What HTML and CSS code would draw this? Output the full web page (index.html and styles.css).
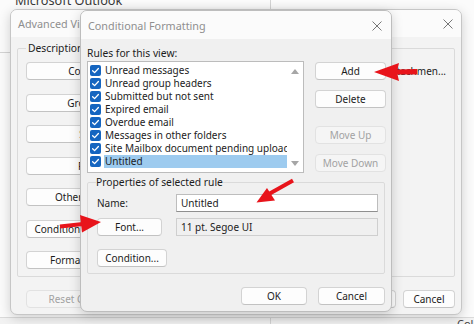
FILE: index.html
```html
<!DOCTYPE html>
<html>
<head>
<meta charset="utf-8">
<link rel="stylesheet" href="styles.css">
</head>
<body>
<div class="app-title">Microsoft Outlook</div>
<div class="deco vtop"></div>
<div class="deco hleft"></div>
<div class="statusbar"><span class="deco vbot"></span><span class="st-text">Col</span></div>

<section class="win adv">
  <header class="tbar">
    <span class="ttl">Advanced View Settings: Compact</span>
    <svg class="xbtn" width="10" height="10" viewBox="0 0 10 10"><path d="M0.5 0.5L9.5 9.5M9.5 0.5L0.5 9.5"/></svg>
  </header>
  <div class="adv-body">
    <fieldset class="grp desc">
      <legend>Description</legend>
      <div class="drows">
        <div class="drow"><button class="btn">Columns...</button><span class="dtext full">Importance, Reminder, Icon, Flag Status, Attachmen...</span></div>
        <div class="drow"><button class="btn">Group By...</button><span class="dtext">None</span></div>
        <div class="drow"><button class="btn">Sort...</button><span class="dtext">Received</span></div>
        <div class="drow"><button class="btn">Filter...</button><span class="dtext">Off</span></div>
        <div class="drow"><button class="btn">Other Settings...</button><span class="dtext">Fonts</span></div>
        <div class="drow"><button class="btn">Conditional Formatting...</button><span class="dtext">User</span></div>
        <div class="drow"><button class="btn">Format Columns...</button><span class="dtext">Specify</span></div>
      </div>
    </fieldset>
    <div class="adv-foot">
      <button class="btn reset" disabled>Reset Current View</button>
      <span class="sp"></span>
      <button class="btn sm">OK</button>
      <button class="btn sm">Cancel</button>
    </div>
  </div>
</section>

<section class="win cf">
  <header class="tbar">
    <span class="ttl">Conditional Formatting</span>
    <svg class="xbtn" width="10" height="10" viewBox="0 0 10 10"><path d="M0.5 0.5L9.5 9.5M9.5 0.5L0.5 9.5"/></svg>
  </header>
  <div class="cf-body">
    <div class="cf-top">
      <div class="cf-left">
        <div class="lbl">Rules for this view:</div>
        <div class="listbox">
          <div class="items">
            <div class="item"><svg class="cb" viewBox="0 0 11 11"><rect width="11" height="11" rx="2"/><path d="M2.6 5.7L4.6 7.6L8.4 3.5"/></svg><span class="it">Unread messages</span></div>
            <div class="item"><svg class="cb" viewBox="0 0 11 11"><rect width="11" height="11" rx="2"/><path d="M2.6 5.7L4.6 7.6L8.4 3.5"/></svg><span class="it">Unread group headers</span></div>
            <div class="item"><svg class="cb" viewBox="0 0 11 11"><rect width="11" height="11" rx="2"/><path d="M2.6 5.7L4.6 7.6L8.4 3.5"/></svg><span class="it">Submitted but not sent</span></div>
            <div class="item"><svg class="cb" viewBox="0 0 11 11"><rect width="11" height="11" rx="2"/><path d="M2.6 5.7L4.6 7.6L8.4 3.5"/></svg><span class="it">Expired email</span></div>
            <div class="item"><svg class="cb" viewBox="0 0 11 11"><rect width="11" height="11" rx="2"/><path d="M2.6 5.7L4.6 7.6L8.4 3.5"/></svg><span class="it">Overdue email</span></div>
            <div class="item"><svg class="cb" viewBox="0 0 11 11"><rect width="11" height="11" rx="2"/><path d="M2.6 5.7L4.6 7.6L8.4 3.5"/></svg><span class="it">Messages in other folders</span></div>
            <div class="item"><svg class="cb" viewBox="0 0 11 11"><rect width="11" height="11" rx="2"/><path d="M2.6 5.7L4.6 7.6L8.4 3.5"/></svg><span class="it">Site Mailbox document pending upload</span></div>
            <div class="item"><svg class="cb" viewBox="0 0 11 11"><rect width="11" height="11" rx="2"/><path d="M2.6 5.7L4.6 7.6L8.4 3.5"/></svg><span class="it sel">Untitled</span></div>
          </div>
          <div class="sbar">
            <svg width="8" height="5" viewBox="0 0 8 5"><path d="M0 5L4 0L8 5Z"/></svg>
            <svg width="8" height="5" viewBox="0 0 8 5"><path d="M0 0L8 0L4 5Z"/></svg>
          </div>
        </div>
      </div>
      <div class="cf-right">
        <button class="btn">Add</button>
        <button class="btn mt10">Delete</button>
        <button class="btn mt18" disabled>Move Up</button>
        <button class="btn mt10" disabled>Move Down</button>
      </div>
    </div>
    <fieldset class="grp props">
      <legend>Properties of selected rule</legend>
      <div class="pgrid">
        <span class="plbl">Name:</span>
        <div class="field inp">Untitled</div>
        <button class="btn font">Font...</button>
        <div class="field ro">11 pt. Segoe UI</div>
        <button class="btn cond">Condition...</button>
      </div>
    </fieldset>
    <div class="cf-foot">
      <button class="btn ok">OK</button>
      <button class="btn cancel">Cancel</button>
    </div>
  </div>
</section>

<svg class="arrows" width="474" height="324" viewBox="0 0 474 324">
  <path d="M374 72L399 63L397.5 69.5L417 69L417 74.5L397.5 74.5L399 81Z"/>
  <line x1="293" y1="180.5" x2="268" y2="194.5"/>
  <path d="M256.5 202.5L267 188L275 200.5Z"/>
  <line x1="60" y1="226.5" x2="83" y2="224"/>
  <path d="M101 222L80 215L82 232.5Z"/>
</svg>
</body>
</html>
```
FILE: styles.css
```css
* { box-sizing: border-box; }
html, body { margin: 0; padding: 0; }
body {
  width: 474px;
  height: 324px;
  overflow: hidden;
  position: relative;
  background: #fbfbfb;
  font-family: "Noto Sans", "Open Sans", "Liberation Sans", sans-serif;
  font-size: 10px;
  color: #1c1c1c;
}

.app-title {
  font-size: 12.7px;
  color: #3a3a3a;
  margin: -8px 0 0 15px;
  line-height: 16px;
  white-space: nowrap;
}

.deco { position: absolute; background: #d4d4d4; }
.vtop { left: 270px; top: 0; width: 1px; height: 10px; }
.hleft { left: 0; top: 52px; width: 10px; height: 1px; }

.statusbar {
  position: absolute;
  left: 0; top: 317px;
  width: 474px; height: 7px;
  background: #f2f2f2;
  border-top: 1px solid #dadada;
}
.vbot { left: 270px; top: 0; width: 1px; height: 7px; }
.st-text {
  position: absolute;
  left: 457px; top: 0;
  font-size: 11px;
  line-height: 12px;
  color: #444;
}

.win {
  position: absolute;
  border: 1px solid #c6c6c6;
  border-radius: 7px;
  background: #f3f3f3;
  box-shadow: 0 3px 12px rgba(0,0,0,0.18);
  overflow: hidden;
}
.tbar {
  height: 27px;
  display: flex;
  align-items: center;
  justify-content: space-between;
  padding: 0 9px 0 7px;
  background: #fbfbfb;
}
.ttl {
  font-size: 10.8px;
  color: #8f8f8f;
  white-space: nowrap;
}
.xbtn path { stroke: #777; stroke-width: 1; fill: none; }

.btn {
  font: inherit;
  color: #1c1c1c;
  height: 18px;
  padding: 0;
  background: #fdfdfd;
  border: 1px solid #d3d3d3;
  border-bottom-color: #c2c2c2;
  border-radius: 4px;
  text-align: center;
  white-space: nowrap;
  overflow: hidden;
}
.btn:disabled {
  color: #a2a2a2;
  background: #f5f5f5;
  border-color: #e2e2e2;
}

.grp {
  margin: 0;
  border: 1px solid #dadada;
  border-radius: 2px;
  min-width: 0;
}
.grp legend {
  padding: 0;
  line-height: 14px;
  height: 14px;
  font-size: 10.3px;
}

/* Advanced view settings */
.adv { left: 10px; top: 9px; width: 452px; }
.adv .tbar { padding-right: 8px; }
.adv-body { padding: 4px 6px 6px 6px; }
.desc { padding: 7px 8px 7px 8px; }
.desc legend { margin-left: 0; padding: 0 2px; }
.drows {
  display: grid;
  grid-template-rows: repeat(7, 18px);
  row-gap: 13.5px;
}
.drow {
  display: grid;
  grid-template-columns: 134px 1fr;
  column-gap: 12px;
  align-items: center;
}
.dtext {
  white-space: nowrap;
  overflow: hidden;
}
.dtext.full { text-align: right; }
.adv-foot {
  display: flex;
  gap: 7px;
  margin-top: 13px;
  padding-left: 9px;
}
.adv-foot .reset { width: 134px; }
.adv-foot .sp { flex: 1; }
.adv-foot .sm { width: 52px; }

/* Conditional formatting */
.cf { left: 80px; top: 10px; width: 312px; background: #f0f0f0; border-color: #bdbdbd; }
.cf .tbar { height: 28px; padding-top: 1px; }
.cf-body { padding: 7px 6px 6px 6px; }
.cf-top { display: flex; gap: 11px; }
.cf-left { width: 217px; }
.lbl { line-height: 15px; height: 15px; font-size: 10.3px; }
.listbox {
  height: 112px;
  border: 1px solid #bcbcbc;
  background: #fff;
  display: flex;
}
.items { flex: 1; padding: 2px 0 0 2px; overflow: hidden; }
.item {
  height: 13px;
  display: flex;
  align-items: center;
  white-space: nowrap;
}
.cb { width: 11px; height: 11px; flex: none; margin-right: 3px; }
.cb rect { fill: #1565c0; }
.cb path { stroke: #fff; stroke-width: 1.3; fill: none; stroke-linecap: round; stroke-linejoin: round; }
.it { flex: 1; padding-left: 1px; line-height: 13px; overflow: hidden; }
.it.sel { background: #9dcbef; }
.sbar {
  width: 16px;
  flex: none;
  display: flex;
  flex-direction: column;
  justify-content: space-between;
  align-items: center;
  padding: 7px 0 6px 0;
}
.sbar path { fill: #a6a6a6; }

.cf-right { width: 71px; display: flex; flex-direction: column; padding-top: 16px; }
.cf-right .btn { width: 71px; }
.mt10 { margin-top: 10px; }
.mt18 { margin-top: 18px; }

.props { margin-top: 2px; padding: 5px 6px 6px 9px; }
.props legend { margin-left: -1px; }
.pgrid {
  display: grid;
  grid-template-columns: 79px 1fr;
  grid-template-rows: 18px 18px 25px;
  row-gap: 6px;
}
.pgrid .cond { grid-row: 3; align-self: end; }
.plbl { align-self: center; }
.font { width: 65px; }
.cond { width: 70px; }
.field {
  height: 18px;
  border: 1px solid #bdbdbd;
  padding-left: 4px;
  line-height: 16px;
  white-space: nowrap;
}
.inp { background: #fff; border-bottom-color: #8f8f8f; }
.ro { background: #f0f0f0; border-color: #cfcfcf; }

.cf-foot {
  display: flex;
  justify-content: flex-end;
  gap: 11px;
  margin-top: 13px;
}
.cf-foot .ok { width: 66px; }
.cf-foot .cancel { width: 67px; }

.arrows {
  position: absolute;
  left: 0; top: 0;
  pointer-events: none;
}
.arrows path { fill: #e8141b; }
.arrows line { stroke: #e8141b; stroke-width: 4; }
```
